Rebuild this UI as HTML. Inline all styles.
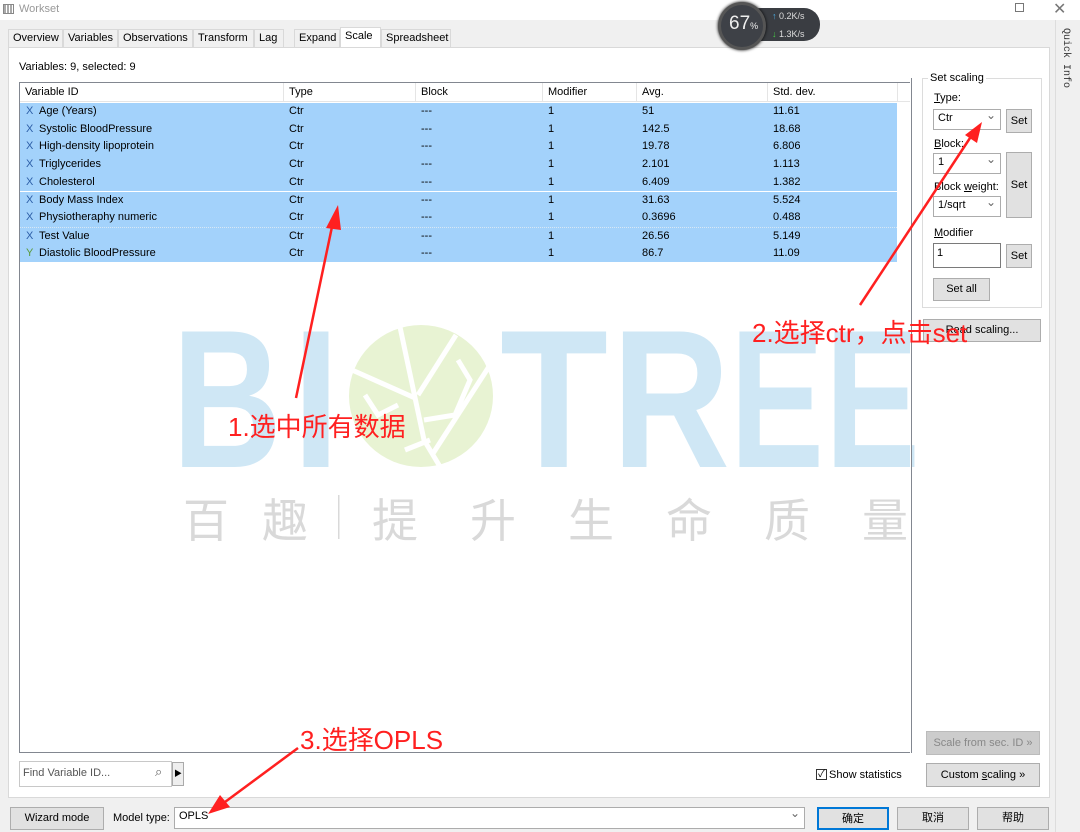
<!DOCTYPE html>
<html><head><meta charset="utf-8"><style>
*{margin:0;padding:0;box-sizing:border-box}
body{width:1080px;height:832px;position:relative;overflow:hidden;background:#f0f0f0;font-family:"Liberation Sans","Noto Sans CJK SC",sans-serif;font-size:11px;color:#000}
.a{position:absolute}
.btn{position:absolute;background:#e1e1e1;border:1px solid #adadad;text-align:center;font-size:11px}
.tab{position:absolute;top:29px;height:18px;border:1px solid #d9d9d9;border-bottom:none;background:#f0f0f0;font-size:11px;padding:2px 4px 0}
.row{position:absolute;left:20px;width:877px;height:17.7px;background:#a3d2fb;font-size:11px;line-height:17px}
.row span{position:absolute}
.red{position:absolute;color:#ff2020;font-size:26px;font-family:"Liberation Sans","Noto Sans CJK SC",sans-serif;white-space:nowrap}
.combo{position:absolute;background:#fff;border:1px solid #acacac;font-size:11px;padding:2px 4px}
.combo::after{content:"⌄";position:absolute;right:4px;top:-2px;color:#666;font-size:12px}
</style></head><body>
<div class="a" style="left:0;top:0;width:1080px;height:20px;background:#fff"></div>
<div class="a" style="left:3px;top:4px;width:11px;height:10px;border:1px solid #888;background:repeating-linear-gradient(90deg,#aaa 0 2px,#fff 2px 3px)"></div>
<div class="a" style="left:19px;top:3px;color:#999;font-size:11px">Workset</div>
<div class="a" style="left:1015px;top:3px;width:9px;height:9px;border:1px solid #777"></div>
<div class="a" style="left:1053px;top:-1px;color:#777;font-size:16px">✕</div>
<div class="tab" style="left:8px;width:55px">Overview</div>
<div class="tab" style="left:63px;width:55px">Variables</div>
<div class="tab" style="left:118px;width:75px">Observations</div>
<div class="tab" style="left:193px;width:61px">Transform</div>
<div class="tab" style="left:254px;width:30px">Lag</div>
<div class="tab" style="left:294px;width:46px">Expand</div>
<div class="tab" style="left:340px;top:27px;height:21px;width:41px;background:#fff">Scale</div>
<div class="tab" style="left:381px;width:70px">Spreadsheet</div>
<div class="a" style="left:8px;top:47px;width:1042px;height:751px;background:#fff;border:1px solid #d9d9d9"></div>
<div class="a" style="left:1055px;top:20px;width:25px;height:812px;background:#f0f0f0;border-left:1px solid #ddd"></div>
<div class="a" style="left:1060px;top:28px;writing-mode:vertical-rl;font-family:'Liberation Mono',monospace;font-size:10px;color:#333">Quick Info</div>
<div class="a" style="left:19px;top:61px">Variables: 9, selected: 9</div>
<div class="a" style="left:19px;top:82px;width:892px;height:671px;border:1px solid #828790;background:#fff"></div>
<div class="a" style="left:20px;top:83px;width:890px;height:19px;border-bottom:1px solid #e5e5e5"></div>
<div class="a" style="top:86px;left:25px">Variable ID</div><div class="a" style="top:86px;left:289px">Type</div><div class="a" style="top:86px;left:421px">Block</div><div class="a" style="top:86px;left:548px">Modifier</div><div class="a" style="top:86px;left:642px">Avg.</div><div class="a" style="top:86px;left:773px">Std. dev.</div>
<div class="a" style="left:283px;top:83px;width:1px;height:18px;background:#e5e5e5"></div><div class="a" style="left:415px;top:83px;width:1px;height:18px;background:#e5e5e5"></div><div class="a" style="left:542px;top:83px;width:1px;height:18px;background:#e5e5e5"></div><div class="a" style="left:636px;top:83px;width:1px;height:18px;background:#e5e5e5"></div><div class="a" style="left:767px;top:83px;width:1px;height:18px;background:#e5e5e5"></div><div class="a" style="left:897px;top:83px;width:1px;height:18px;background:#e5e5e5"></div>
<div class="row" style="top:103px"><span style="left:6px;color:#2d5fa8">X</span><span style="left:19px">Age (Years)</span><span style="left:269px">Ctr</span><span style="left:401px">---</span><span style="left:528px">1</span><span style="left:622px">51</span><span style="left:753px">11.61</span></div>
<div class="row" style="top:120.7px"><span style="left:6px;color:#2d5fa8">X</span><span style="left:19px">Systolic BloodPressure</span><span style="left:269px">Ctr</span><span style="left:401px">---</span><span style="left:528px">1</span><span style="left:622px">142.5</span><span style="left:753px">18.68</span></div>
<div class="row" style="top:138.4px"><span style="left:6px;color:#2d5fa8">X</span><span style="left:19px">High-density lipoprotein</span><span style="left:269px">Ctr</span><span style="left:401px">---</span><span style="left:528px">1</span><span style="left:622px">19.78</span><span style="left:753px">6.806</span></div>
<div class="row" style="top:156.1px"><span style="left:6px;color:#2d5fa8">X</span><span style="left:19px">Triglycerides</span><span style="left:269px">Ctr</span><span style="left:401px">---</span><span style="left:528px">1</span><span style="left:622px">2.101</span><span style="left:753px">1.113</span></div>
<div class="row" style="top:173.8px"><span style="left:6px;color:#2d5fa8">X</span><span style="left:19px">Cholesterol</span><span style="left:269px">Ctr</span><span style="left:401px">---</span><span style="left:528px">1</span><span style="left:622px">6.409</span><span style="left:753px">1.382</span></div>
<div class="row" style="top:191.5px"><span style="left:6px;color:#2d5fa8">X</span><span style="left:19px">Body Mass Index</span><span style="left:269px">Ctr</span><span style="left:401px">---</span><span style="left:528px">1</span><span style="left:622px">31.63</span><span style="left:753px">5.524</span></div>
<div class="row" style="top:209.2px"><span style="left:6px;color:#2d5fa8">X</span><span style="left:19px">Physiotheraphy numeric</span><span style="left:269px">Ctr</span><span style="left:401px">---</span><span style="left:528px">1</span><span style="left:622px">0.3696</span><span style="left:753px">0.488</span></div>
<div class="row" style="top:226.9px;border-top:1px dotted #d8e8f5"><span style="left:6px;color:#2d5fa8">X</span><span style="left:19px">Test Value</span><span style="left:269px">Ctr</span><span style="left:401px">---</span><span style="left:528px">1</span><span style="left:622px">26.56</span><span style="left:753px">5.149</span></div>
<div class="row" style="top:244.6px"><span style="left:6px;color:#5a9a3a">Y</span><span style="left:19px">Diastolic BloodPressure</span><span style="left:269px">Ctr</span><span style="left:401px">---</span><span style="left:528px">1</span><span style="left:622px">86.7</span><span style="left:753px">11.09</span></div>
<svg class="a" style="left:0;top:0" width="1080" height="832">
<g fill="#cfe7f5" font-family="Liberation Sans" font-weight="bold" font-size="197">
<text x="172" y="467" textLength="110" lengthAdjust="spacingAndGlyphs">B</text>
<text x="292" y="467" textLength="48" lengthAdjust="spacingAndGlyphs">I</text>
<text x="500" y="467" textLength="108" lengthAdjust="spacingAndGlyphs">T</text>
<text x="612" y="467" textLength="118" lengthAdjust="spacingAndGlyphs">R</text>
<text x="730" y="467" textLength="94" lengthAdjust="spacingAndGlyphs">E</text>
<text x="825" y="467" textLength="95" lengthAdjust="spacingAndGlyphs">E</text>
</g>
<ellipse cx="421" cy="396" rx="72" ry="71" fill="#e8f3d3"/>
<g stroke="#fff" stroke-width="5" fill="none"><path d="M400 327 L424 440 L442 470"/><path d="M352 370 L415 398"/><path d="M456 335 L418 395"/><path d="M490 365 L432 455"/><path d="M365 395 L378 415 L398 405"/><path d="M424 420 L455 415 L470 380 L458 360"/><path d="M430 440 L405 450"/></g>
<g fill="#d9d9d9" font-family="Noto Sans CJK SC" font-size="46">
<text x="183" y="537">百</text><text x="262" y="537">趣</text><text x="372" y="537">提</text><text x="470" y="537">升</text><text x="568" y="537">生</text><text x="666" y="537">命</text><text x="764" y="537">质</text><text x="862" y="537">量</text></g>
<rect x="338" y="495" width="1.5" height="44" fill="#d9d9d9"/>
<rect x="910" y="78" width="2" height="675" fill="#fff"/>
<rect x="911" y="78" width="1" height="675" fill="#828790"/>
</svg>
<div class="a" style="left:922px;top:78px;width:120px;height:230px;border:1px solid #dcdcdc"></div>
<div class="a" style="left:928px;top:72px;background:#fff;padding:0 2px">Set scaling</div>
<div class="a" style="left:934px;top:92px"><u>T</u>ype:</div>
<div class="combo" style="left:933px;top:109px;width:68px;height:21px">Ctr</div>
<div class="btn" style="left:1006px;top:109px;width:26px;height:24px;line-height:22px">Set</div>
<div class="a" style="left:934px;top:138px"><u>B</u>lock:</div>
<div class="combo" style="left:933px;top:153px;width:68px;height:21px">1</div>
<div class="a" style="left:934px;top:181px">Block <u>w</u>eight:</div>
<div class="combo" style="left:933px;top:196px;width:68px;height:21px">1/sqrt</div>
<div class="btn" style="left:1006px;top:152px;width:26px;height:66px;line-height:64px">Set</div>
<div class="a" style="left:934px;top:227px"><u>M</u>odifier</div>
<div class="a" style="left:933px;top:243px;width:68px;height:25px;border:1px solid #7a7a7a;background:#fff;padding:3px 3px">1</div>
<div class="btn" style="left:1006px;top:244px;width:26px;height:24px;line-height:22px">Set</div>
<div class="btn" style="left:933px;top:278px;width:57px;height:23px;line-height:21px">Set all</div>
<div class="btn" style="left:923px;top:319px;width:118px;height:23px;line-height:21px">Read scaling...</div>
<div class="btn" style="left:926px;top:731px;width:114px;height:24px;line-height:22px;background:#ccc;border-color:#bbb;color:#888">Scale from sec. ID »</div>
<div class="btn" style="left:926px;top:763px;width:114px;height:24px;line-height:22px">Custom <u>s</u>caling »</div>
<div class="a" style="left:816px;top:769px;width:11px;height:11px;border:1px solid #333;font-size:10px;line-height:9px;text-align:center">✓</div>
<div class="a" style="left:829px;top:769px">Show statistics</div>
<div class="a" style="left:19px;top:761px;width:153px;height:26px;border:1px solid #c8c8c8;background:#fff;color:#555;padding:5px 3px">Find Variable ID...</div>
<div class="a" style="left:155px;top:764px;color:#666;font-size:13px">⌕</div>
<div class="a" style="left:172px;top:762px;width:12px;height:24px;border:1px solid #aaa;background:#eee;font-size:8px;line-height:22px;text-align:center">▶</div>
<div class="btn" style="left:10px;top:807px;width:94px;height:23px;line-height:21px">Wizard mode</div>
<div class="a" style="left:113px;top:812px">Model type:</div>
<div class="combo" style="left:174px;top:807px;width:631px;height:22px">OPLS</div>
<div class="btn" style="left:817px;top:807px;width:72px;height:23px;line-height:21px;border:2px solid #0078d7">确定</div>
<div class="btn" style="left:897px;top:807px;width:72px;height:23px;line-height:21px">取消</div>
<div class="btn" style="left:977px;top:807px;width:72px;height:23px;line-height:21px">帮助</div>
<div class="a" style="left:745px;top:8px;width:75px;height:33px;border-radius:16px;background:#3a3d42"></div>
<div class="a" style="left:718px;top:2px;width:48px;height:48px;border-radius:50%;background:#3e4147;border:3px solid #555;box-shadow:0 0 3px #000"></div>
<div class="a" style="left:729px;top:13px;color:#eee;font-size:19px">67<span style="font-size:9px">%</span></div>
<div class="a" style="left:772px;top:11px;color:#ddd;font-size:9px"><span style="color:#4ab0e8">↑</span> 0.2K/s</div>
<div class="a" style="left:772px;top:29px;color:#ddd;font-size:9px"><span style="color:#4c4">↓</span> 1.3K/s</div>
<svg class="a" style="left:0;top:0" width="1080" height="832" fill="#ff2020" stroke="#ff2020">
<line x1="296" y1="398" x2="333" y2="222" stroke-width="2.5"/><polygon points="338,205 326,228 341,230" stroke="none"/>
<line x1="860" y1="305" x2="972" y2="135" stroke-width="2.5"/><polygon points="982,122 965,135 977,143" stroke="none"/>
<line x1="298" y1="748" x2="225" y2="802" stroke-width="2.5"/><polygon points="208,814 220,795 230,807" stroke="none"/>
</svg>
<div class="red" style="left:228px;top:407px">1.选中所有数据</div>
<div class="red" style="left:752px;top:313px">2.选择ctr，点击set</div>
<div class="red" style="left:300px;top:720px">3.选择OPLS</div>
</body></html>
